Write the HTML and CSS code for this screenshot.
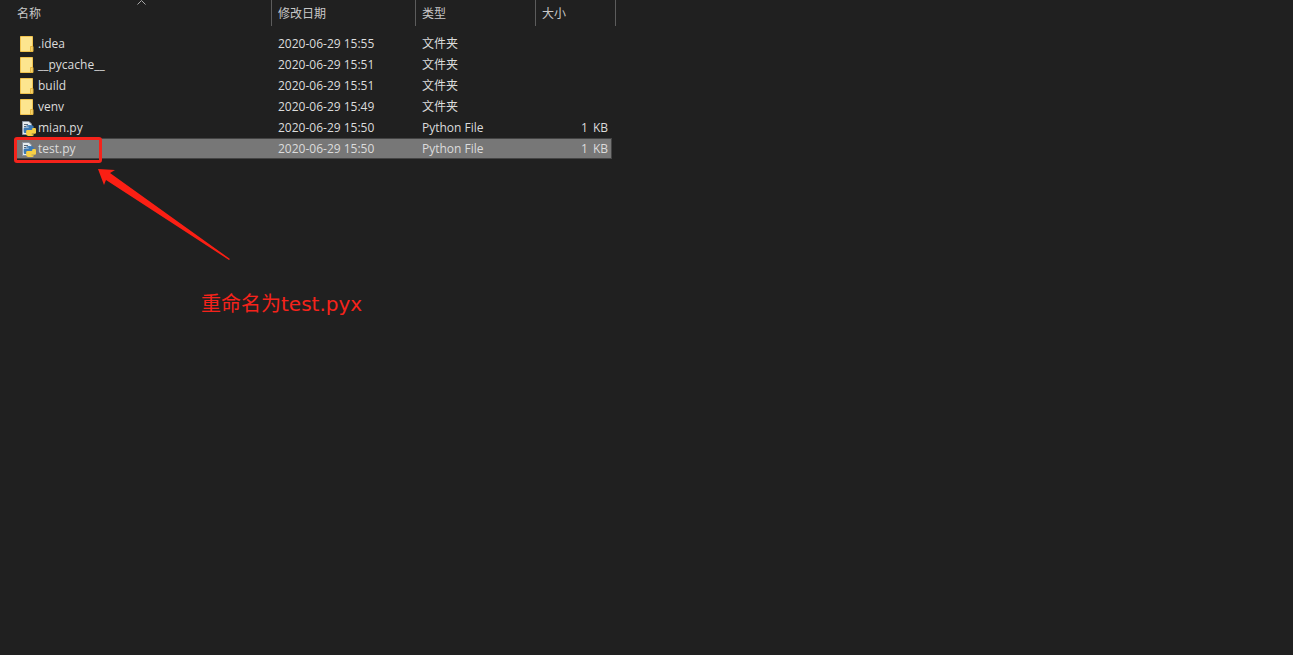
FILE: index.html
```html
<!DOCTYPE html>
<html lang="zh">
<head>
<meta charset="utf-8">
<title>test.py</title>
<link rel="stylesheet" href="styles.css">
</head>
<body>
<svg class="defs" width="0" height="0">
  <defs>
    <symbol id="folder" viewBox="0 0 16 16">
      <path d="M0.5 0.5H12.5V15.5H0.5Z" fill="#fde58f" stroke="#f2c44f"/>
      <path d="M10.5 15.5V10.5H13V15.5Z" fill="#f7d36b" stroke="#e8b83f"/>
    </symbol>
    <symbol id="pyfile" viewBox="0 0 16 16">
      <path d="M2.5 1.5H9L11.5 4V14.5H2.5Z" fill="#e6ebef" stroke="#8a94a0"/>
      <path d="M4 4.5H8M4 6.5H6M4 8.5H5M4 10.5H5" stroke="#5a6878" fill="none"/>
      <g transform="translate(-2.6 -2.6) scale(1.25)">
        <path d="M5 11V9Q5 8 6 8H9V7.5H7V7Q7 6 10 6Q13 6 13 7.5V10Q13 11 12 11H9Q8 11 8 12V12.5H6Q5 12.5 5 11Z" fill="#3c78b2"/>
        <path d="M15 10V12Q15 13 14 13H11V13.5H13V14Q13 15 10 15Q7 15 7 13.5V11Q7 10 8 10H11Q12 10 12 9V8.5H14Q15 8.5 15 10Z" fill="#f7d044"/>
      </g>
    </symbol>
  </defs>
</svg>
<main class="explorer">
  <header class="head">
    <div class="hcell hname">名称<span class="sort"><svg class="chev" width="9" height="5" viewBox="0 0 9 5"><path d="M0.5 4.5L4.5 0.5L8.5 4.5" fill="none" stroke="#a8a8a8"/></svg></span></div>
    <div class="hcell hdate">修改日期</div>
    <div class="hcell htype">类型</div>
    <div class="hcell hsize">大小</div>
  </header>
  <section class="rows">
    <div class="row"><div class="name"><svg class="icon"><use href="#folder"/></svg>.idea</div><div class="date">2020-06-29 15:55</div><div class="type">文件夹</div><div class="size"></div></div>
    <div class="row"><div class="name"><svg class="icon"><use href="#folder"/></svg>__pycache__</div><div class="date">2020-06-29 15:51</div><div class="type">文件夹</div><div class="size"></div></div>
    <div class="row"><div class="name"><svg class="icon"><use href="#folder"/></svg>build</div><div class="date">2020-06-29 15:51</div><div class="type">文件夹</div><div class="size"></div></div>
    <div class="row"><div class="name"><svg class="icon"><use href="#folder"/></svg>venv</div><div class="date">2020-06-29 15:49</div><div class="type">文件夹</div><div class="size"></div></div>
    <div class="row"><div class="name"><svg class="icon"><use href="#pyfile"/></svg>mian.py</div><div class="date">2020-06-29 15:50</div><div class="type">Python File</div><div class="size">1 KB</div></div>
    <div class="row selected"><div class="name"><svg class="icon"><use href="#pyfile"/></svg>test.py</div><div class="date">2020-06-29 15:50</div><div class="type">Python File</div><div class="size">1 KB</div></div>
  </section>
</main>
<div class="mark-box"></div>
<svg class="mark-arrow" width="140" height="100" viewBox="0 0 140 100">
  <path d="M1 1L18 2L13 5L133 91L132 92L9 12L7 17Z" fill="#fb1f14"/>
</svg>
<div class="mark-label">重命名为test.pyx</div>
</body>
</html>
```

FILE: styles.css
```css
* { box-sizing: border-box; }
html, body { margin: 0; height: 100%; }
body {
  background: #202020;
  color: #dcdcdc;
  font: 12px/21px "Open Sans", "Noto Sans CJK SC", sans-serif;
  overflow: hidden;
  position: relative;
}
.defs { position: absolute; }
.explorer { width: 616px; }
.head { display: flex; height: 26px; }
.hcell {
  border-right: 1px solid #5c5c5c;
  padding-left: 6px;
  line-height: 27px;
  color: #c8c8c8;
  position: relative;
}
.hname { width: 272px; padding-left: 17px; }
.hdate { width: 144px; }
.htype { width: 120px; }
.hsize { width: 80px; }
.sort { position: absolute; left: 137px; top: 0; }
.chev { display: block; }
.rows { padding: 7px 4px 0 16px; }
.row { display: flex; height: 21px; }
.name { width: 256px; padding-left: 4px; display: flex; align-items: center; gap: 2px; }
.icon { width: 16px; height: 16px; flex: none; }
.date { width: 144px; padding-left: 6px; }
.type { width: 120px; padding-left: 6px; }
.size { width: 76px; padding-right: 4px; text-align: right; word-spacing: 2px; }
.selected { background: #777; box-shadow: inset 0 0 0 1px #444; }
.mark-box {
  position: absolute;
  left: 14px;
  top: 137px;
  width: 88px;
  height: 26px;
  border: 3px solid #f5231b;
  border-radius: 3px;
}
.mark-arrow { position: absolute; left: 97px; top: 168px; }
.mark-label {
  position: absolute;
  left: 201px;
  top: 290px;
  color: #f5231b;
  font: 20px/28px "DejaVu Sans", "Noto Sans CJK SC", sans-serif;
}
```
